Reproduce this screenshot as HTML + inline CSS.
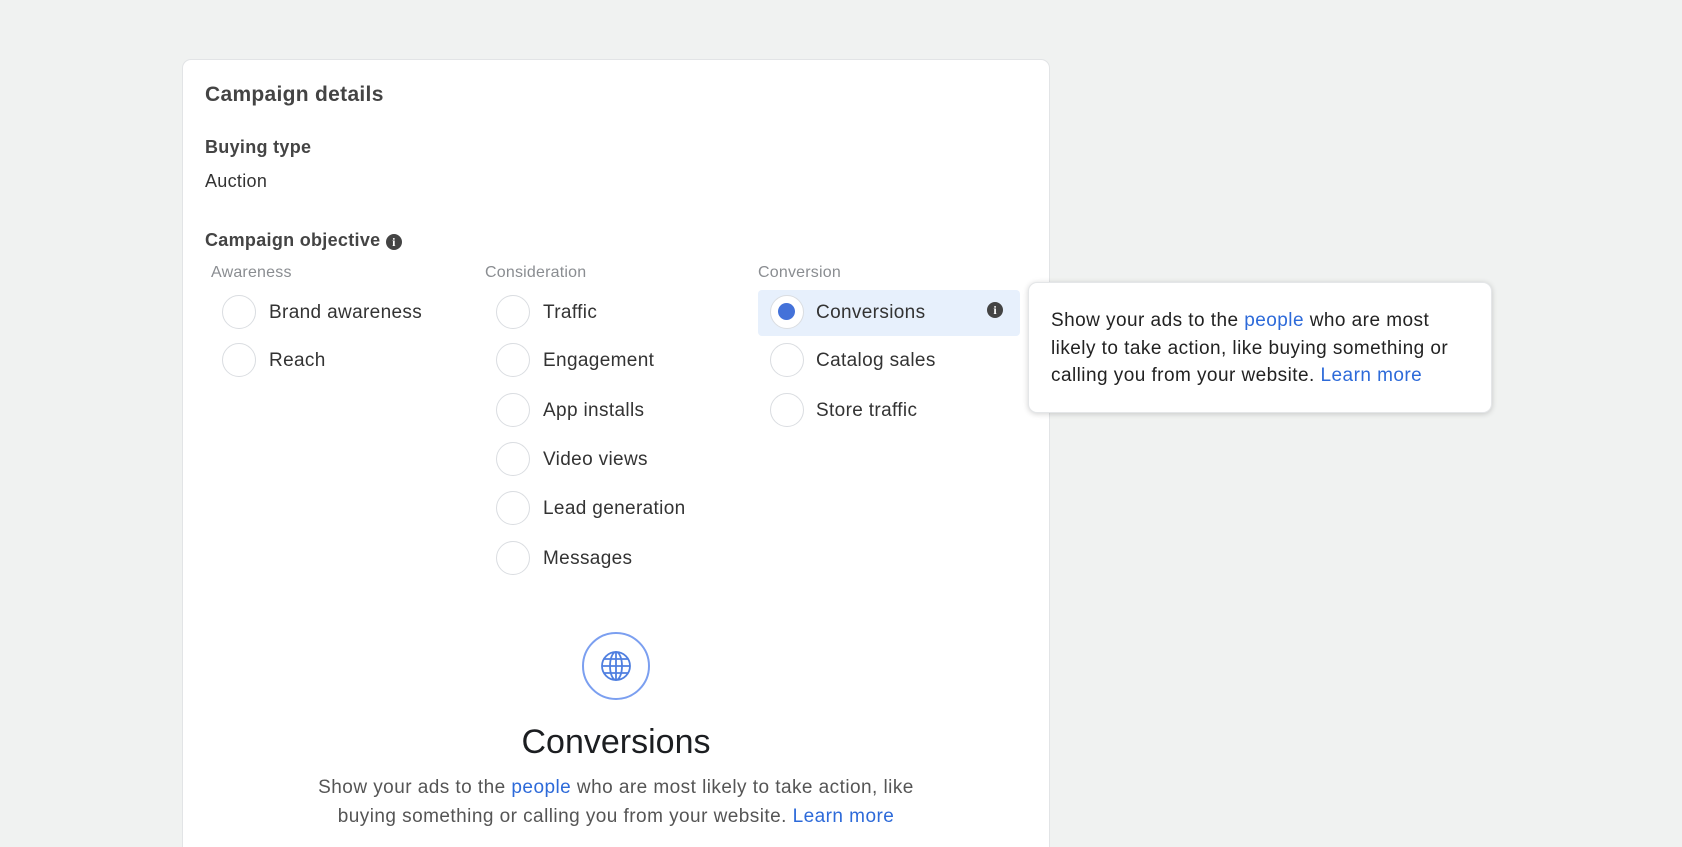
<!DOCTYPE html>
<html><head><meta charset="utf-8"><style>
*{margin:0;padding:0;box-sizing:border-box}
html,body{width:1682px;height:847px;overflow:hidden}
body{background:#f0f2f1;font-family:"Liberation Sans",Arial,sans-serif;color:#1c1e21}
#w{position:relative;width:1682px;height:847px;overflow:hidden}
.card{position:absolute;left:182px;top:59px;width:868px;height:798px;background:#fff;border:1px solid #e2e4e6;border-radius:9px}
.t{position:absolute;white-space:nowrap}
.h{font-weight:bold;color:#444;letter-spacing:0.3px}
.lab{font-size:16px;color:#8a8d91;letter-spacing:0.2px}
.r{position:absolute;width:34px;height:34px;border:1.5px solid #dadde1;border-radius:50%;background:#fff}
.rl{position:absolute;font-size:19px;color:#333;white-space:nowrap;letter-spacing:0.35px}
.info{display:inline-block;width:16px;height:16px;border-radius:50%;background:#444;color:#fff;font-size:12px;font-weight:bold;text-align:center;line-height:16px;font-family:"Liberation Serif",serif;letter-spacing:0}
a{color:#2d6ad9;text-decoration:none}
</style></head><body><div id="w">
<div class="card"></div>
<div class="t h" style="left:205px;top:83px;font-size:21px">Campaign details</div>
<div class="t h" style="left:205px;top:137px;font-size:18px">Buying type</div>
<div class="t" style="left:205px;top:171px;font-size:18px;color:#333;letter-spacing:0.3px">Auction</div>
<div class="t h" style="left:205px;top:230px;font-size:18px">Campaign objective <span class="info" style="vertical-align:0px">i</span></div>
<div class="t lab" style="left:211px;top:264px">Awareness</div>
<div class="t lab" style="left:485px;top:264px">Consideration</div>
<div class="t lab" style="left:758px;top:264px">Conversion</div>
<div style="position:absolute;left:758px;top:290px;width:262px;height:46px;background:#e7f0fc;border-radius:4px"></div>

<div class="r" style="left:222px;top:295px"></div><div class="rl" style="left:269px;top:302px">Brand awareness</div>
<div class="r" style="left:222px;top:343px"></div><div class="rl" style="left:269px;top:350px">Reach</div>

<div class="r" style="left:496px;top:295px"></div><div class="rl" style="left:543px;top:302px">Traffic</div>
<div class="r" style="left:496px;top:343px"></div><div class="rl" style="left:543px;top:350px">Engagement</div>
<div class="r" style="left:496px;top:393px"></div><div class="rl" style="left:543px;top:400px">App installs</div>
<div class="r" style="left:496px;top:442px"></div><div class="rl" style="left:543px;top:449px">Video views</div>
<div class="r" style="left:496px;top:491px"></div><div class="rl" style="left:543px;top:498px">Lead generation</div>
<div class="r" style="left:496px;top:541px"></div><div class="rl" style="left:543px;top:548px">Messages</div>

<div class="r" style="left:770px;top:295px"><div style="position:absolute;left:7px;top:7px;width:17px;height:17px;border-radius:50%;background:#4472d9"></div></div>
<div class="rl" style="left:816px;top:302px">Conversions</div>
<span class="info" style="position:absolute;left:987px;top:302px">i</span>
<div class="r" style="left:770px;top:343px"></div><div class="rl" style="left:816px;top:350px">Catalog sales</div>
<div class="r" style="left:770px;top:393px"></div><div class="rl" style="left:816px;top:400px">Store traffic</div>

<div style="position:absolute;left:1028px;top:282px;width:464px;height:131px;background:#fff;border-radius:9px;box-shadow:0 1px 6px rgba(0,0,0,.18);border:1px solid #e4e6e8"></div>
<div class="t" style="left:1051px;top:307px;font-size:19px;letter-spacing:0.45px;line-height:27.5px;color:#222">Show your ads to the <a>people</a> who are most<br>likely to take action, like buying something or<br>calling you from your website. <a>Learn more</a></div>

<svg style="position:absolute;left:580px;top:630px" width="72" height="72" viewBox="0 0 72 72">
<circle cx="36" cy="36" r="33" fill="none" stroke="#7b9ff0" stroke-width="2"/>
<g fill="none" stroke="#4f7fe0" stroke-width="1.8">
<circle cx="36" cy="36" r="14"/>
<ellipse cx="36" cy="36" rx="6" ry="14"/>
<line x1="36" y1="22" x2="36" y2="50"/>
<line x1="22" y1="36" x2="50" y2="36"/>
<line x1="24" y1="29" x2="48" y2="29"/>
<line x1="24" y1="43" x2="48" y2="43"/>
</g></svg>

<div class="t" style="left:182px;width:868px;text-align:center;top:723px;font-size:34px;color:#1c1e21">Conversions</div>
<div class="t" style="left:182px;width:868px;text-align:center;top:773px;font-size:19px;letter-spacing:0.45px;line-height:29px;color:#555">Show your ads to the <a>people</a> who are most likely to take action, like<br>buying something or calling you from your website. <a>Learn more</a></div>
</div></body></html>
